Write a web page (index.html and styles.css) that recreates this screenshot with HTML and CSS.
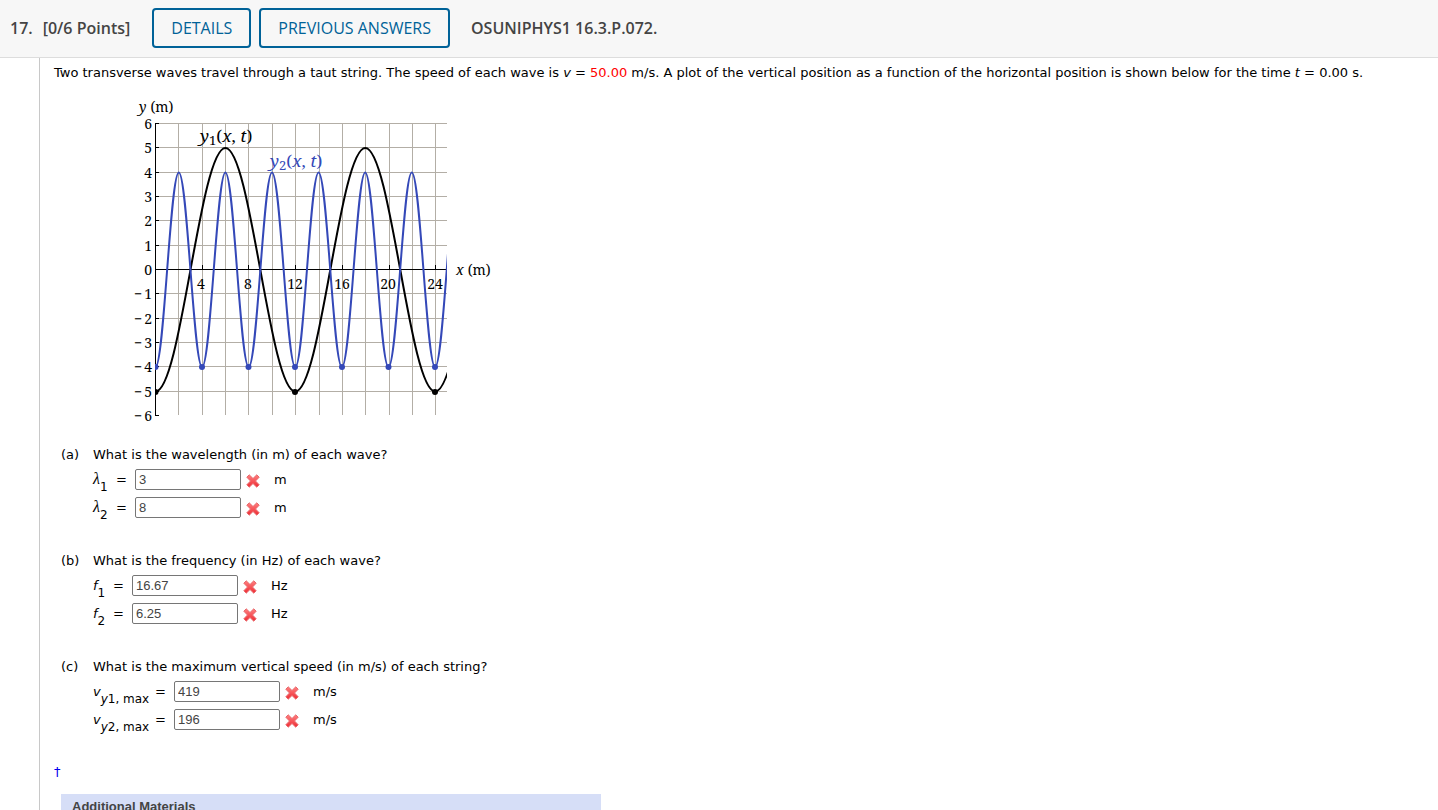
FILE: index.html
```html
<!DOCTYPE html>
<html lang="en">
<head>
<meta charset="utf-8">
<title>OSUNIPHYS1 16.3.P.072.</title>
<link rel="stylesheet" href="styles.css">
</head>
<body>
<svg class="defs" width="0" height="0" aria-hidden="true">
  <defs>
    <linearGradient id="red" x1="0" y1="0" x2="0" y2="1"><stop offset="0" stop-color="#ff8080"/><stop offset="1" stop-color="#ee2c34"/></linearGradient>
    <symbol id="wrong" viewBox="0 0 14 14">
      <path d="M3.2.8 7 4.5 10.8.8 13.2 3.2 9.5 7l3.7 3.8-2.4 2.4L7 9.5l-3.800 3.700L.8 10.800 4.500 7 .8 3.200Z" fill="url(#red)" stroke="#e8696d" stroke-width="1" stroke-linejoin="round"/>
    </symbol>
  </defs>
</svg>
<header class="bar">
  <span class="number">17.</span>
  <span class="points">[0/6 Points]</span>
  <button class="btn" type="button">DETAILS</button>
  <button class="btn" type="button">PREVIOUS ANSWERS</button>
  <span class="code">OSUNIPHYS1 16.3.P.072.</span>
</header>
<main class="question">
  <p class="prompt">Two transverse waves travel through a taut string. The speed of each wave is <i>v</i> = <span class="given">50.00</span> m/s. A plot of the vertical position as a function of the horizontal position is shown below for the time <i>t</i> = 0.00 s.</p>
  <svg class="plot" width="370" height="330" viewBox="0 0 370 330" role="img" aria-label="Plot of two waves">
    <clipPath id="area"><rect x="25" y="20" width="292" height="299"/></clipPath>
    <path class="grid" d="M48.5 26V318M72.5 26V318M95.5 26V318M118.5 26V318M142.5 26V318M165.5 26V318M189.5 26V318M212.5 26V318M235.5 26V318M259.5 26V318M282.5 26V318M305.5 26V318M26 26.500H317M26 50.500H317M26 75.500H317M26 99.500H317M26 123.500H317M26 148.500H317M26 196.500H317M26 221.500H317M26 245.500H317M26 269.500H317M26 294.500H317"/>
    <path class="axis" d="M25.500 26V319M25 172.500H317M26 26.500H29M26 50.500H29M26 75.500H29M26 99.500H29M26 123.500H29M26 148.500H29M26 196.500H29M26 221.500H29M26 245.500H29M26 269.500H29M26 294.500H29M26 318.500H29M72.500 168V172M118.500 168V172M165.500 168V172M212.500 168V172M259.500 168V172M305.500 168V172"/>
    <g clip-path="url(#area)">
      <path class="wave one" d="M25.500 294.500C51 294.500 70 51 95.400 51S139.800 294.500 165.300 294.500 209.800 51 235.300 51 279.700 294.500 305.200 294.500 349.600 51 375 51"/>
      <g class="dot one"><circle cx="25.500" cy="295" r="3"/><circle cx="165" cy="295" r="3"/><circle cx="305" cy="295" r="3"/></g>
      <path class="wave two" d="M25.500 270C34 270 40.300 75.500 48.800 75.500S63.600 270 72.100 270 86.900 75.500 95.400 75.500 110.200 270 118.700 270 133.500 75.500 142 75.500 156.800 270 165.300 270 180.100 75.500 188.600 75.500 203.400 270 211.900 270 226.700 75.500 235.200 75.500 250 270 258.500 270 273.300 75.500 281.800 75.500 296.600 270 305.100 270 319.900 75.500 328.400 75.500"/>
      <g class="dot two"><circle cx="25.500" cy="270" r="3"/><circle cx="72" cy="270" r="3"/><circle cx="118.500" cy="270" r="3"/><circle cx="165" cy="270" r="3"/><circle cx="212" cy="270" r="3"/><circle cx="258.500" cy="270" r="3"/><circle cx="305" cy="270" r="3"/></g>
    </g>
    <g class="tick end">
      <text x="22" y="32">6</text><text x="22" y="56">5</text><text x="22" y="81">4</text><text x="22" y="105">3</text><text x="22" y="129">2</text><text x="22" y="154">1</text><text x="22" y="178">0</text><text x="22" y="202">−<tspan dx="2">1</tspan></text><text x="22" y="227">−<tspan dx="2">2</tspan></text><text x="22" y="251">−<tspan dx="2">3</tspan></text><text x="22" y="275">−<tspan dx="2">4</tspan></text><text x="22" y="300">−<tspan dx="2">5</tspan></text><text x="22" y="324">−<tspan dx="2">6</tspan></text>
    </g>
    <g class="tick mid">
      <text x="71" y="192">4</text><text x="118" y="192">8</text><text x="165" y="192">12</text><text x="212" y="192">16</text><text x="258" y="192">20</text><text x="305" y="192">24</text>
    </g>
    <text class="unit" x="9" y="15"><tspan class="it">y</tspan><tspan dx="4">(m)</tspan></text>
    <text class="unit" x="326" y="178"><tspan class="it">x</tspan><tspan dx="4">(m)</tspan></text>
    <text class="name" x="70" y="45"><tspan class="it">y</tspan><tspan class="low" dy="3">1</tspan><tspan dy="-3">(</tspan><tspan class="it">x</tspan>, <tspan class="it">t</tspan>)</text>
    <text class="name blue" x="140" y="70"><tspan class="it">y</tspan><tspan class="low" dy="3">2</tspan><tspan dy="-3">(</tspan><tspan class="it">x</tspan>, <tspan class="it">t</tspan>)</text>
  </svg>

  <section class="part">
    <span class="letter">(a)</span>
    <div class="body">
      <p>What is the wavelength (in m) of each wave?</p>
      <div class="row"><label for="l1"><i class="lam">λ</i><sub>1</sub></label><span class="eq">=</span><input id="l1" type="text" value="3"><svg class="mark" role="img" aria-label="incorrect"><use href="#wrong"/></svg><span>m</span></div>
      <div class="row"><label for="l2"><i class="lam">λ</i><sub>2</sub></label><span class="eq">=</span><input id="l2" type="text" value="8"><svg class="mark" role="img" aria-label="incorrect"><use href="#wrong"/></svg><span>m</span></div>
    </div>
  </section>
  <section class="part freq">
    <span class="letter">(b)</span>
    <div class="body">
      <p>What is the frequency (in Hz) of each wave?</p>
      <div class="row"><label for="f1"><i>f</i><sub>1</sub></label><span class="eq">=</span><input id="f1" type="text" value="16.67"><svg class="mark" role="img" aria-label="incorrect"><use href="#wrong"/></svg><span>Hz</span></div>
      <div class="row"><label for="f2"><i>f</i><sub>2</sub></label><span class="eq">=</span><input id="f2" type="text" value="6.25"><svg class="mark" role="img" aria-label="incorrect"><use href="#wrong"/></svg><span>Hz</span></div>
    </div>
  </section>
  <section class="part speed">
    <span class="letter">(c)</span>
    <div class="body">
      <p>What is the maximum vertical speed (in m/s) of each string?</p>
      <div class="row"><label for="v1"><i>v</i><sub><i>y</i>1, max</sub></label><span class="eq">=</span><input id="v1" type="text" value="419"><svg class="mark" role="img" aria-label="incorrect"><use href="#wrong"/></svg><span>m/s</span></div>
      <div class="row"><label for="v2"><i>v</i><sub><i>y</i>2, max</sub></label><span class="eq">=</span><input id="v2" type="text" value="196"><svg class="mark" role="img" aria-label="incorrect"><use href="#wrong"/></svg><span>m/s</span></div>
    </div>
  </section>
  <a class="dagger" href="#materials">†</a>
  <h2 class="materials" id="materials">Additional Materials</h2>
</main>
</body>
</html>
```
FILE: styles.css
```css
* { box-sizing: border-box; }
html { overflow: hidden; }
body { margin: 0; height: 100vh; overflow: hidden; background: #fff; color: #000; font: 13px/20px Verdana, "DejaVu Sans", sans-serif; }
p { margin: 0; }
.defs { position: absolute; }
.bar { display: flex; align-items: center; padding: 8px 10px 9px; border-bottom: 1px solid #ddd; background: #f7f7f7; color: #444; font: 600 16px/24px "Open Sans", sans-serif; }
.points { margin: 0 22px 0 10px; }
.btn { height: 40px; margin-right: 8px; padding: 0 17px; border: 2px solid #006298; border-radius: 4px; background: transparent; color: #006298; font: 500 16px/24px "Open Sans", sans-serif; }
.code { margin-left: 13px; }
.question { margin-left: 39px; padding: 5px 14px 0; border-left: 1px solid #c8c8c8; }
.prompt { white-space: nowrap; }
.given { color: #f00; }
.plot { display: block; margin: 14px 0 18px 76px; font-family: "Noto Serif", "Droid Serif", "DejaVu Serif", serif; }
.grid { fill: none; stroke: #b3aea6; stroke-width: 1; }
.axis { fill: none; stroke: #000; stroke-width: 1; }
.wave { fill: none; stroke-width: 2; }
.wave.one { stroke: #000; }
.wave.two { stroke: #3448b8; }
.dot.two, .blue { fill: #3448b8; }
.tick { font-size: 14px; }
.end { text-anchor: end; }
.mid { text-anchor: middle; }
.unit { font-size: 14px; }
.name { font-size: 17px; }
.it { font-style: italic; }
.low { font-size: 13px; }
.part { display: flex; margin-bottom: 30px; padding-left: 7px; }
.letter { flex: 0 0 32px; }
.row { display: flex; align-items: center; height: 28px; }
.row label, .row span { padding-top: 2px; }
.row label { flex: 0 0 23px; white-space: nowrap; line-height: 20px; }
.row sub { font-size: 12px; line-height: 0; vertical-align: -7px; }
.lam { font-family: "Liberation Serif", serif; font-size: 16px; line-height: 0; }
.eq { flex: 0 0 19px; }
.freq .row label { flex-basis: 20px; }
.speed .row label { flex-basis: 62px; }
.row input { width: 106px; height: 21px; padding: 1px 3px; border: 1px solid #767676; border-radius: 2px; background: #fff; color: #444; font: 13px "Liberation Sans", Arial, sans-serif; }
.mark { width: 14px; height: 14px; margin: 3px 14px 0 5px; }
.dagger { display: block; width: 10px; color: #00e; font-size: 13px; line-height: 18px; text-decoration: none; }
.materials { width: 540px; max-width: 100%; margin: 13px 0 0 7px; padding: 4px 11px; background: #d6def7; color: #444; font: bold 13px/18px "Liberation Sans", Arial, sans-serif; }
```
